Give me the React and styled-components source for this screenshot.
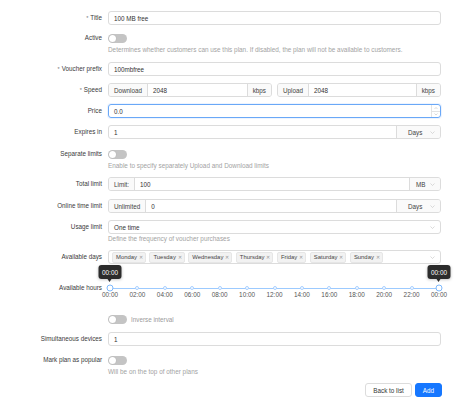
import styled, { createGlobalStyle } from "styled-components"

const Global = createGlobalStyle`
body{
    margin: 0;
    background: #fff;
    font-family: "Liberation Sans", Arial, sans-serif;
    color: #333;
}
*{ box-sizing: border-box; }
`

const Form = styled.div`
width: 442px;
padding-top: 11px;
`

const Row = styled.div`
display: grid;
grid-template-columns: 108px 333px;
margin-bottom: ${p => p.mb ?? 7}px;
`

const Label = styled.div`
text-align: right;
padding-right: 6px;
font-size: 6.3px;
line-height: 14px;
height: 14px;
white-space: nowrap;
color: #3a3a3a;

& .req{
    color: #777;
    margin-right: 2px;
    font-size: 5.5px;
}
`

const Control = styled.div`
display: flex;
flex-direction: column;
min-width: 0;
`

const Input = styled.div`
height: 14px;
border: 1px solid ${p => p.focus ? "#6aa8f7" : "#dcdcdc"};
box-shadow: ${p => p.focus ? "0 0 0 1px rgba(22,119,255,0.08)" : "none"};
border-radius: 3px;
padding: 0 5px;
font-size: 6.3px;
display: flex;
align-items: center;
justify-content: space-between;
color: #333;
`

const Group = styled.div`
height: 14px;
flex: 1;
display: flex;
border: 1px solid #dcdcdc;
border-radius: 3px;
overflow: hidden;
font-size: 6.3px;
`

const Pair = styled.div`
display: flex;
gap: 5px;
`

const Addon = styled.div`
display: flex;
align-items: center;
padding: 0 5px;
background: #fafafa;
color: #444;
border-right: ${p => p.last ? "none" : "1px solid #dcdcdc"};
border-left: ${p => p.last ? "1px solid #dcdcdc" : "none"};
`

const Field = styled.div`
flex: 1;
display: flex;
align-items: center;
padding: 0 5px;
`

const SelectAddon = styled.div`
width: ${p => p.w}px;
display: flex;
align-items: center;
justify-content: space-between;
padding: 0 5px 0 ${p => p.pl ?? 11}px;
background: #fafafa;
border-left: 1px solid #dcdcdc;
color: #444;
`

const Help = styled.div`
font-size: 6.4px;
line-height: 9px;
color: #a3a3a3;
white-space: nowrap;
`

const SwitchLine = styled.div`
height: 14px;
display: flex;
align-items: center;
gap: 4px;
font-size: 6.3px;
color: #9a9a9a;
`

const Switch = styled.div`
width: 19px;
height: 9px;
border-radius: 5px;
background: #c4c4c4;
position: relative;

&::after{
    content: "";
    position: absolute;
    left: 1px;
    top: 1px;
    width: 7px;
    height: 7px;
    border-radius: 50%;
    background: #fff;
    box-shadow: 0 0 1px rgba(0,0,0,0.2);
}
`

const Tags = styled.div`
height: 14px;
border: 1px solid #dcdcdc;
border-radius: 3px;
display: flex;
align-items: center;
gap: 3.5px;
padding: 0 5px 0 3px;
font-size: 5.9px;

& .chev{ margin-left: auto; }
`

const Tag = styled.span`
height: 11px;
display: flex;
align-items: center;
gap: 2px;
padding: 0 2px 0 3px;
background: #f2f2f2;
border: 1px solid #e6e6e6;
border-radius: 2px;
color: #444;

& i{
    font-style: normal;
    color: #999;
    font-size: 4.5px;
}
`

const Slider = styled.div`
position: relative;
height: 14px;
margin: 0 2px;
`

const Track = styled.div`
position: absolute;
left: 0;
right: 0;
top: 6.5px;
height: 1.3px;
background: #9ccaff;
`

const Dot = styled.span`
position: absolute;
top: 7px;
width: 4px;
height: 4px;
border-radius: 50%;
background: #fff;
border: 1px solid #a8d0ff;
transform: translate(-50%, -50%);
`

const Handle = styled.span`
position: absolute;
top: 7px;
width: 7px;
height: 7px;
border-radius: 50%;
background: #fff;
border: 1.3px solid #7db8fb;
transform: translate(-50%, -50%);
`

const Mark = styled.span`
position: absolute;
top: 10px;
font-size: 6.4px;
line-height: 8px;
color: #555;
transform: translateX(-50%);
`

const Tip = styled.span`
position: absolute;
bottom: 16px;
transform: translateX(-50%);
width: 23px;
height: 14px;
border-radius: 3px;
background: #2c2c2c;
color: #fff;
font-size: 6.4px;
display: flex;
align-items: center;
justify-content: center;
box-shadow: 0 1px 3px rgba(0,0,0,0.2);

&::after{
    content: "";
    position: absolute;
    left: 50%;
    bottom: -3px;
    margin-left: -2.5px;
    border-left: 2.5px solid transparent;
    border-right: 2.5px solid transparent;
    border-top: 3px solid #2c2c2c;
}
`

const Spinner = styled.div`
width: 9px;
height: 12px;
margin-right: -5px;
border-left: 1px solid #e3e3e3;
display: flex;
flex-direction: column;

& span{
    flex: 1;
    display: flex;
    align-items: center;
    justify-content: center;
}
& span + span{ border-top: 1px solid #e3e3e3; }
`

const Buttons = styled.div`
display: flex;
justify-content: flex-end;
gap: 3px;
margin-top: 7px;
`

const Button = styled.button`
height: 14px;
padding: 0 ${p => p.px}px;
border-radius: 3px;
font-family: inherit;
font-size: 6.3px;
cursor: pointer;
border: 1px solid ${p => p.primary ? "#1677ff" : "#dcdcdc"};
background: ${p => p.primary ? "#1677ff" : "#fff"};
color: ${p => p.primary ? "#fff" : "#333"};
`

const Chevron = ({ className }) => (
    <svg className={className} width="5" height="3" viewBox="0 0 10 6">
        <path d="M1 1l4 4 4-4" fill="none" stroke="#c2c2c2" strokeWidth="1.2" />
    </svg>
)

const Arrow = ({ up }) => (
    <svg width="4" height="2.5" viewBox="0 0 8 5">
        <path d={up ? "M1 4l3-3 3 3" : "M1 1l3 3 3-3"} fill="none" stroke="#b5b5b5" strokeWidth="1" />
    </svg>
)

const days = ["Monday", "Tuesday", "Wednesday", "Thursday", "Friday", "Saturday", "Sunday"]
const hours = ["00:00", "02:00", "04:00", "06:00", "08:00", "10:00", "12:00", "14:00", "16:00", "18:00", "20:00", "22:00", "00:00"]

const Item = ({ label, req, mb, children }) => (
    <Row mb={mb}>
        <Label>{req && <span className="req">*</span>}{label}</Label>
        <Control>{children}</Control>
    </Row>
)

const App = () => {
    return <>
        <Global />
        <Form>
            <Item label="Title" req mb={6}>
                <Input>100 MB free</Input>
            </Item>
            <Item label="Active" mb={8}>
                <SwitchLine><Switch /></SwitchLine>
                <Help>Determines whether customers can use this plan. If disabled, the plan will not be available to customers.</Help>
            </Item>
            <Item label="Voucher prefix" req>
                <Input>100mbfree</Input>
            </Item>
            <Item label="Speed" req>
                <Pair>
                    <Group>
                        <Addon>Download</Addon>
                        <Field>2048</Field>
                        <Addon last>kbps</Addon>
                    </Group>
                    <Group>
                        <Addon>Upload</Addon>
                        <Field>2048</Field>
                        <Addon last>kbps</Addon>
                    </Group>
                </Pair>
            </Item>
            <Item label="Price">
                <Input focus>
                    0.0
                    <Spinner><span><Arrow up /></span><span><Arrow /></span></Spinner>
                </Input>
            </Item>
            <Item label="Expires in" mb={8}>
                <Group>
                    <Field>1</Field>
                    <SelectAddon w={44}>Days<Chevron /></SelectAddon>
                </Group>
            </Item>
            <Item label="Separate limits">
                <SwitchLine><Switch /></SwitchLine>
                <Help>Enable to specify separately Upload and Download limits</Help>
            </Item>
            <Item label="Total limit" mb={8}>
                <Group>
                    <Addon>Limit:</Addon>
                    <Field>100</Field>
                    <SelectAddon w={31} pl={6}>MB<Chevron /></SelectAddon>
                </Group>
            </Item>
            <Item label="Online time limit">
                <Group>
                    <Addon>Unlimited</Addon>
                    <Field>0</Field>
                    <SelectAddon w={44}>Days<Chevron /></SelectAddon>
                </Group>
            </Item>
            <Item label="Usage limit">
                <Input>One time<Chevron /></Input>
                <Help>Define the frequency of voucher purchases</Help>
            </Item>
            <Item label="Available days" mb={17}>
                <Tags>
                    {days.map(d => <Tag key={d}>{d}<i>✕</i></Tag>)}
                    <Chevron className="chev" />
                </Tags>
            </Item>
            <Item label="Available hours" mb={17}>
                <Slider>
                    <Track />
                    {hours.map((h, i) => <Dot key={"d" + i} style={{ left: `${i / 12 * 100}%` }} />)}
                    {hours.map((h, i) => <Mark key={"m" + i} style={{ left: `${i / 12 * 100}%` }}>{h}</Mark>)}
                    <Handle style={{ left: "0%" }} />
                    <Handle style={{ left: "100%" }} />
                    <Tip style={{ left: "0%" }}>00:00</Tip>
                    <Tip style={{ left: "100%" }}>00:00</Tip>
                </Slider>
            </Item>
            <Item label="" mb={6}>
                <SwitchLine><Switch />Inverse interval</SwitchLine>
            </Item>
            <Item label="Simultaneous devices">
                <Input>1</Input>
            </Item>
            <Item label="Mark plan as popular" mb={0}>
                <SwitchLine><Switch /></SwitchLine>
                <Help>Will be on the top of other plans</Help>
            </Item>
            <Buttons>
                <Button px={7}>Back to list</Button>
                <Button primary px={7}>Add</Button>
            </Buttons>
        </Form>
    </>
}

export default App
